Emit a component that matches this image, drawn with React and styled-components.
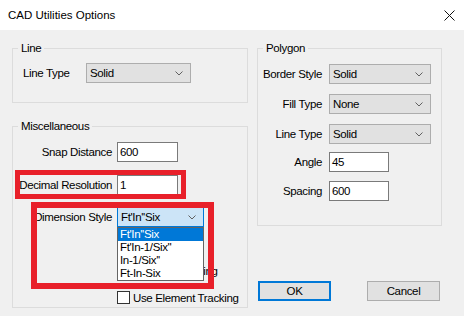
import styled, { createGlobalStyle } from "styled-components";

const GlobalStyle = createGlobalStyle`
  html, body {
    margin: 0;
    padding: 0;
  }
  body {
    background: #f0f0f0;
    font-family: "Liberation Sans", Arial, sans-serif;
    color: #000;
  }
`;

function Chevron() {
  return (
    <svg width="8" height="5" viewBox="0 0 8 5">
      <path d="M0.5 0.5 L4 4 L7.5 0.5" stroke="#606060" fill="none" />
    </svg>
  );
}

export default function App() {
  return (
    <Window>
      <GlobalStyle />
      <TitleBar>
        <span>CAD Utilities Options</span>
        <Close>
          <svg width="11" height="11" viewBox="0 0 11 11">
            <path d="M0.5 0.5 L10.5 10.5 M10.5 0.5 L0.5 10.5" stroke="#111" fill="none" />
          </svg>
        </Close>
      </TitleBar>

      <Body>
        <Column $w={236}>
          <Group $h={55}>
            <Legend>Line</Legend>
            <Row $mt={8} $pl={10}>
              <Label $w={63}>Line Type</Label>
              <Combo $w={105}>
                <span>Solid</span>
                <Chevron />
              </Combo>
            </Row>
          </Group>

          <Group $h={182} $mt={23}>
            <Legend>Miscellaneous</Legend>
            <Row $mt={9}>
              <Label $w={99} $right $gap={5}>Snap Distance</Label>
              <Field $w={61}>600</Field>
            </Row>
            <Row $mt={13}>
              <Label $w={99} $right $gap={5}>Decimal Resolution</Label>
              <Field $w={61}>1</Field>
            </Row>
            <Row $mt={12}>
              <Label $w={99} $right $gap={5}>Dimension Style</Label>
              <ComboWrap>
                <Combo $w={87} $focus>
                  <span>Ft'In''Six</span>
                  <Chevron />
                </Combo>
                <DropList>
                  <Option $active>Ft'In''Six</Option>
                  <Option>Ft'In-1/Six''</Option>
                  <Option>In-1/Six''</Option>
                  <Option>Ft-In-Six</Option>
                </DropList>
              </ComboWrap>
            </Row>
            <CheckRow $mt={37}>
              <Box />
              <span>Use Grid Spacing</span>
            </CheckRow>
            <CheckRow $mt={14}>
              <Box />
              <span>Use Element Tracking</span>
            </CheckRow>
          </Group>
        </Column>

        <Column $w={185}>
          <Group $h={178}>
            <Legend>Polygon</Legend>
            <Row $mt={9}>
              <Label $w={64} $right $gap={7}>Border Style</Label>
              <Combo $w={102}>
                <span>Solid</span>
                <Chevron />
              </Combo>
            </Row>
            <Row $mt={10}>
              <Label $w={64} $right $gap={7}>Fill Type</Label>
              <Combo $w={102}>
                <span>None</span>
                <Chevron />
              </Combo>
            </Row>
            <Row $mt={10}>
              <Label $w={64} $right $gap={7}>Line Type</Label>
              <Combo $w={102}>
                <span>Solid</span>
                <Chevron />
              </Combo>
            </Row>
            <Row $mt={8}>
              <Label $w={64} $right $gap={7}>Angle</Label>
              <Field $w={60}>45</Field>
            </Row>
            <Row $mt={9}>
              <Label $w={64} $right $gap={7}>Spacing</Label>
              <Field $w={60}>600</Field>
            </Row>
          </Group>

          <Buttons>
            <Button $primary>OK</Button>
            <Button>Cancel</Button>
          </Buttons>
        </Column>
      </Body>

      <Highlight $x={15} $y={170} $w={171} $h={29} $b={5} />
      <Highlight $x={31} $y={202} $w={183} $h={87} $b={6} />
    </Window>
  );
}

const Window = styled.div`
  position: relative;
  width: 464px;
  height: 316px;
  overflow: hidden;
  background: #f0f0f0;
  font-size: 11.5px;
  letter-spacing: -0.35px;
`;
const TitleBar = styled.div`
  height: 30px;
  background: #fff;
  display: flex;
  align-items: center;
  justify-content: space-between;
  padding-left: 8px;
  font-size: 11.5px;
  letter-spacing: 0;
`;
const Close = styled.div`
  width: 30px;
  height: 30px;
  display: flex;
  align-items: center;
  justify-content: center;
`;
const Body = styled.div`
  display: flex;
  gap: 9px;
  padding: 18px 0 0 12px;
`;
const Column = styled.div`
  width: ${(p) => p.$w}px;
  display: flex;
  flex-direction: column;
`;
const Group = styled.div`
  box-sizing: border-box;
  height: ${(p) => p.$h}px;
  margin-top: ${(p) => p.$mt || 0}px;
  border: 1px solid #dcdcdc;
  display: flex;
  flex-direction: column;
`;
const Legend = styled.span`
  align-self: flex-start;
  margin: -8px 0 0 5px;
  padding: 0 3px;
  height: 14px;
  line-height: 14px;
  background: #f0f0f0;
`;
const Row = styled.div`
  display: flex;
  align-items: center;
  height: 20px;
  margin-top: ${(p) => p.$mt}px;
  padding-left: ${(p) => p.$pl || 0}px;
`;
const Label = styled.span`
  width: ${(p) => p.$w}px;
  margin-right: ${(p) => p.$gap || 0}px;
  text-align: ${(p) => (p.$right ? "right" : "left")};
  white-space: nowrap;
`;
const Combo = styled.div`
  box-sizing: border-box;
  width: ${(p) => p.$w}px;
  height: 20px;
  display: flex;
  align-items: center;
  justify-content: space-between;
  padding: 0 7px 0 3px;
  background: ${(p) => (p.$focus ? "#cce4f7" : "#e1e1e1")};
  border: 1px solid ${(p) => (p.$focus ? "#0078d7" : "#adadad")};
`;
const ComboWrap = styled.div`
  position: relative;
`;
const DropList = styled.div`
  position: absolute;
  top: 100%;
  left: 0;
  width: 87px;
  box-sizing: border-box;
  border: 1px solid #646464;
  background: #fff;
  z-index: 2;
`;
const Option = styled.div`
  height: 13px;
  line-height: 13px;
  padding-left: 2px;
  background: ${(p) => (p.$active ? "#0078d7" : "transparent")};
  color: ${(p) => (p.$active ? "#fff" : "#000")};
  white-space: nowrap;
`;
const Field = styled.div`
  box-sizing: border-box;
  width: ${(p) => p.$w}px;
  height: 20px;
  display: flex;
  align-items: center;
  padding-left: 2px;
  background: #fff;
  border: 1px solid #7a7a7a;
`;
const CheckRow = styled.div`
  display: flex;
  align-items: center;
  height: 13px;
  margin-top: ${(p) => p.$mt}px;
  padding-left: 104px;
  white-space: nowrap;
`;
const Box = styled.span`
  box-sizing: border-box;
  width: 13px;
  height: 13px;
  margin-right: 3px;
  background: #fff;
  border: 1px solid #333;
`;
const Buttons = styled.div`
  display: flex;
  justify-content: space-between;
  margin-top: 55px;
  padding: 0 2px 0 1px;
`;
const Button = styled.div`
  box-sizing: border-box;
  width: 73px;
  height: 20px;
  display: flex;
  align-items: center;
  justify-content: center;
  background: #e1e1e1;
  border: ${(p) => (p.$primary ? "2px solid #0078d7" : "1px solid #adadad")};
`;
const Highlight = styled.div`
  position: absolute;
  left: ${(p) => p.$x}px;
  top: ${(p) => p.$y}px;
  width: ${(p) => p.$w}px;
  height: ${(p) => p.$h}px;
  box-sizing: border-box;
  border: ${(p) => p.$b}px solid #e8202a;
  pointer-events: none;
`;
